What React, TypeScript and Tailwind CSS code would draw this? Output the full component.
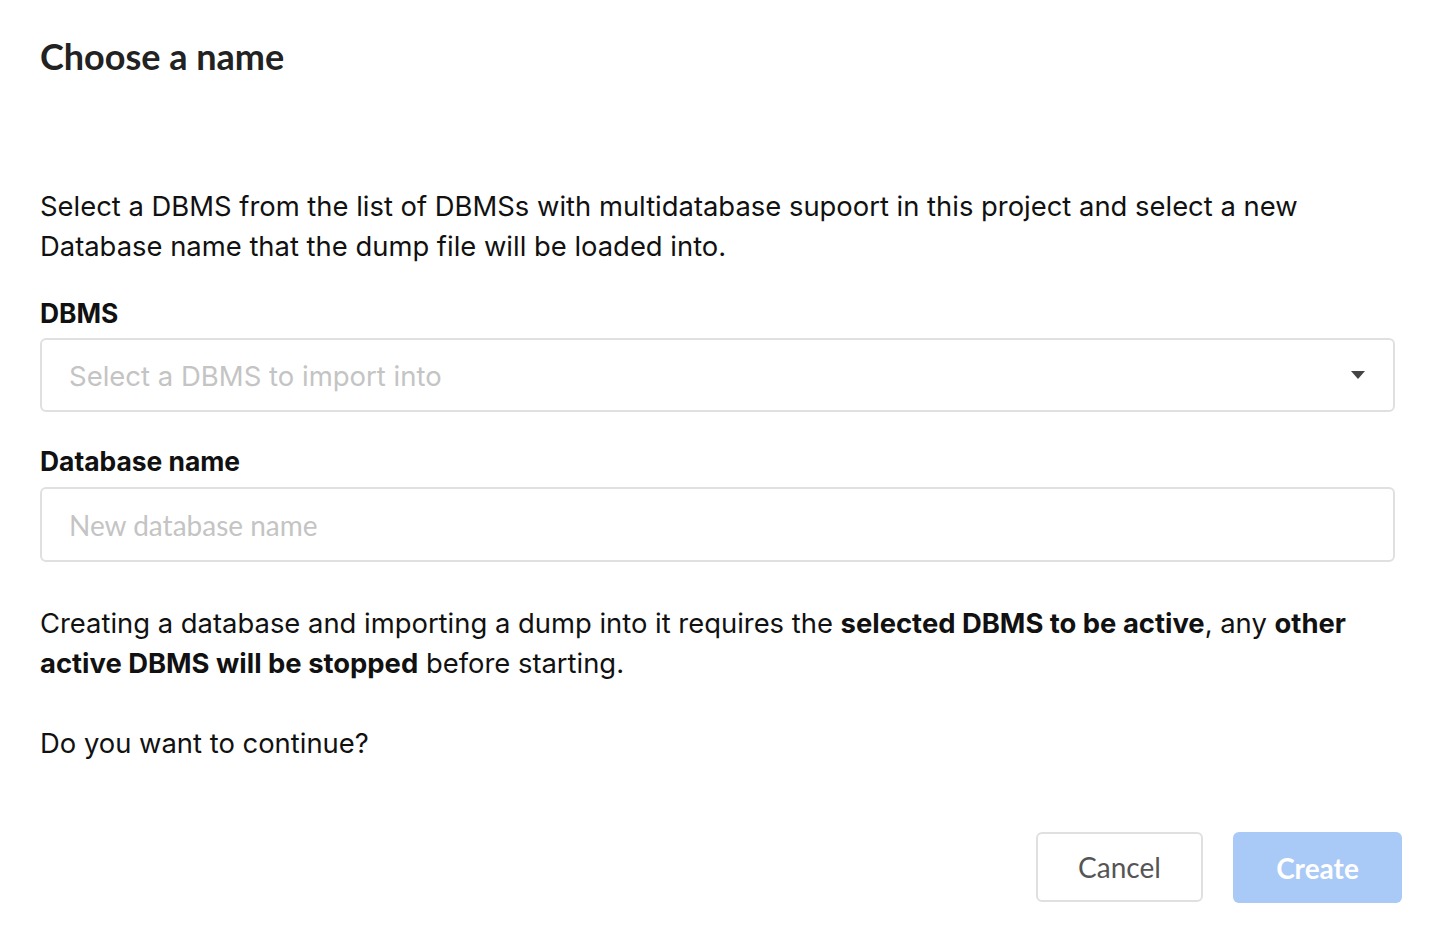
import React from "react";

const sans = "font-['Inter','Noto_Sans',sans-serif]";
const lato = "font-['Lato','Noto_Sans',sans-serif]";

const Caret: React.FC = () => (
  <svg width="16" height="10" viewBox="0 0 16 10" className="shrink-0">
    <path d="M1 1 L15 1 L8 9 Z" fill="#444" />
  </svg>
);

export default function App() {
  return (
    <div className={`min-h-[930px] bg-white pl-[40px] pr-[36px] pt-[34px] ${sans} text-[#111]`}>
      <h1 className={`${lato} font-bold text-[36px] leading-[44px] text-[#222]`}>Choose a name</h1>

      <p className="mt-[108px] text-[27.4px] leading-[40px] pr-[40px]">
        Select a DBMS from the list of DBMSs with multidatabase supoort in this project and select a new Database
        name that the dump file will be loaded into.
      </p>

      <div className="mt-[31px] mr-[7px]">
        <label className="block text-[26.4px] leading-[32px] font-bold">DBMS</label>
        <div className="mt-[9px] h-[74px] border-2 border-[#e0e0e0] rounded-[6px] flex items-center justify-between pl-[27px] pr-[27px]">
          <span className="pt-[3px] text-[27.5px] text-[#c4c4c4]">Select a DBMS to import into</span>
          <Caret />
        </div>

        <label className="block mt-[33px] text-[26.4px] leading-[32px] font-bold">Database name</label>
        <div className="mt-[10px] h-[75px] border-2 border-[#e0e0e0] rounded-[6px] flex items-center pl-[27px]">
          <span className={`${lato} text-[28px] text-[#c4c4c4]`}>New database name</span>
        </div>
      </div>

      <p className="mt-[41px] text-[27.4px] leading-[40px] pr-[20px]">
        Creating a database and importing a dump into it requires the <b>selected DBMS to be active</b>, any{" "}
        <b>other active DBMS will be stopped</b> before starting.
      </p>

      <p className="mt-[40px] text-[27.4px] leading-[40px]">Do you want to continue?</p>

      <div className="mt-[69px] flex justify-end gap-[30px]">
        <button className={`${lato} w-[167px] h-[70px] border-2 border-[#e0e0e0] rounded-[6px] text-[28px] text-[#555] bg-white`}>
          Cancel
        </button>
        <button className={`${lato} w-[169px] h-[71px] rounded-[6px] text-[28px] font-bold text-white bg-[#a9c9f7]`}>
          Create
        </button>
      </div>
    </div>
  );
}
